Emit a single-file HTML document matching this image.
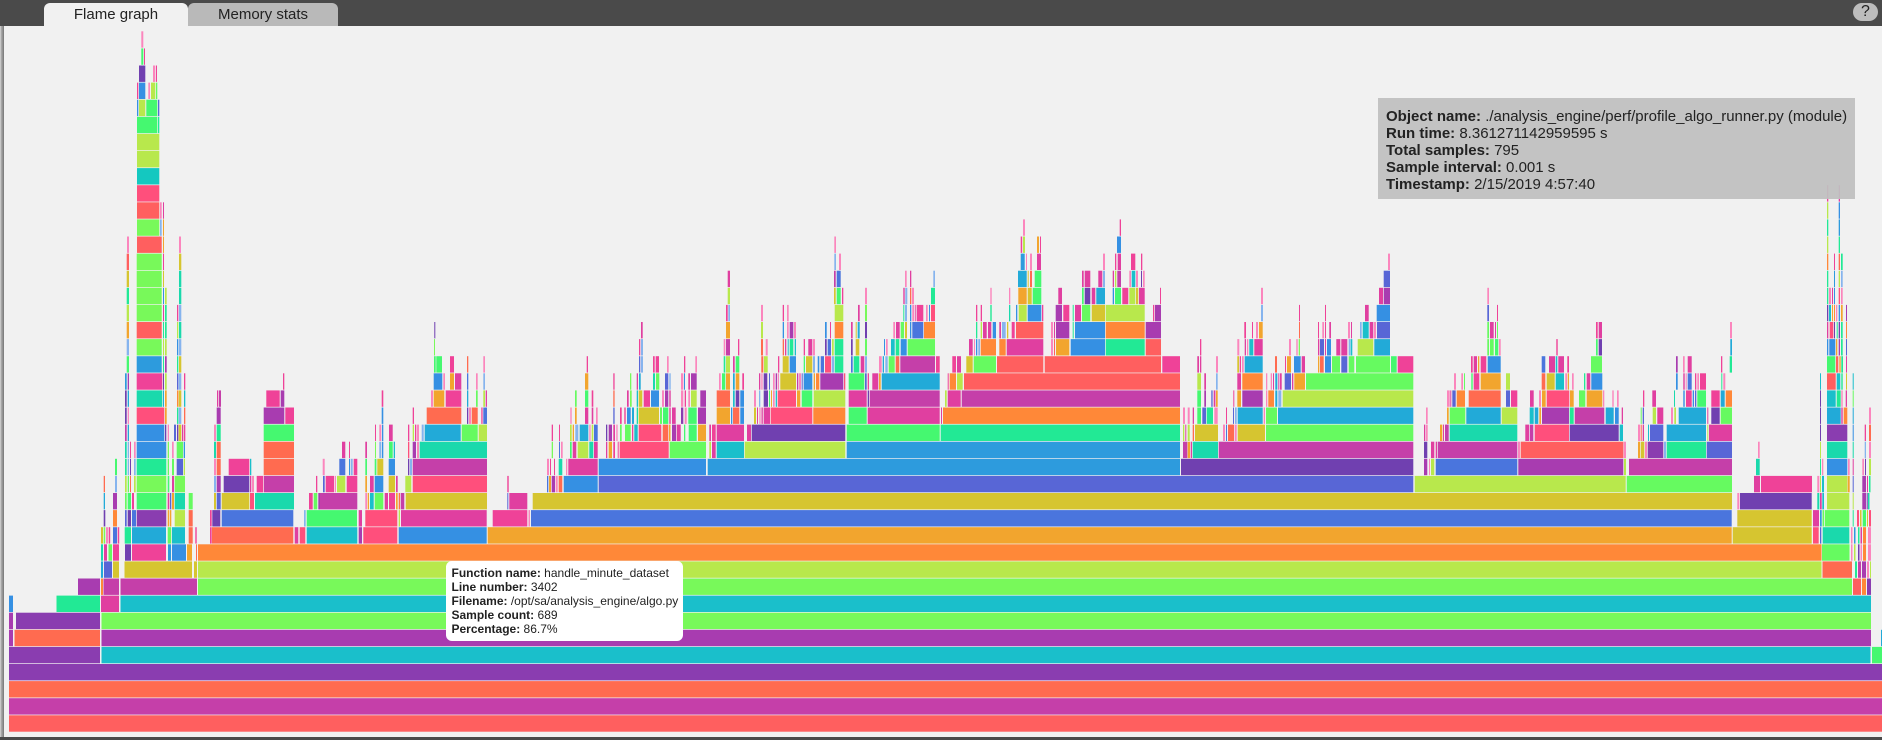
<!DOCTYPE html>
<html><head><meta charset="utf-8"><style>
html,body{margin:0;padding:0;width:1882px;height:740px;overflow:hidden;background:#f1f1f1;font-family:"Liberation Sans",sans-serif}
#top{position:absolute;left:0;top:0;width:1882px;height:26px;background:#4a4a4a}
#bot{position:absolute;left:0;top:737px;width:1882px;height:3px;background:#4a4a4a}
#l1{position:absolute;left:0;top:26px;width:1px;height:711px;background:#c8c8c8}
#l2{position:absolute;left:1px;top:26px;width:3px;height:711px;background:linear-gradient(90deg,#b0b0b0,#777)}
.tab{position:absolute;top:3px;height:23px;line-height:24px;text-align:center;font-size:15px;color:#222;border-radius:6px 6px 0 0}
#q{position:absolute;left:1853px;top:3px;width:25px;height:18px;border-radius:9px;background:#bdbdbd;text-align:center;font-size:16px;line-height:18px;color:#222}
svg{position:absolute;left:0;top:0}
rect{height:16.4px}
.a{fill:#ff5f5f}.b{fill:#c53fa9}.c{fill:#ff6b50}.d{fill:#8a3db0}.e{fill:#1abfcb}.f{fill:#a83cb0}.g{fill:#78f95a}.h{fill:#b8e84c}.i{fill:#ff8838}.j{fill:#f2a52e}.k{fill:#4a75dd}.l{fill:#5866d6}.m{fill:#2d9bdd}.n{fill:#22e995}.o{fill:#ef4298}.p{fill:#d6c530}.q{fill:#66fa60}.r{fill:#1ad9ac}.s{fill:#7040b0}.t{fill:#ff4f7c}.u{fill:#3590e3}.v{fill:#45f870}.w{fill:#22aad8}.x{fill:#e03fa0}.y{fill:#fb86bd}.z{fill:#86b4ee}
#info{position:absolute;left:1378px;top:98px;width:477px;height:101px;background:rgba(191,191,191,.94);box-sizing:border-box;padding:9.5px 0 0 8px;font-size:15px;line-height:17px;color:#222;white-space:nowrap}
#tip{position:absolute;left:446px;top:561px;width:237px;height:80px;background:#fff;border-radius:6px;box-sizing:border-box;padding:5px 0 0 5.5px;font-size:12px;line-height:14.1px;color:#222;white-space:nowrap}
</style></head><body>
<div id="top"></div><div id="bot"></div><div id="l1"></div><div id="l2"></div>
<div class="tab" style="left:44px;width:144px;background:#f1f1f1">Flame graph</div>
<div class="tab" style="left:188px;width:150px;background:#b9b9b9">Memory stats</div>
<div id="q">?</div>
<svg width="1882" height="740" xmlns="http://www.w3.org/2000/svg">
<g transform="translate(0,715.3)"><rect x=9 width=1873 class=a /></g>
<g transform="translate(0,698.2)"><rect x=9 width=1873 class=b /></g>
<g transform="translate(0,681.1)"><rect x=9 width=1873 class=c /></g>
<g transform="translate(0,664)"><rect x=9 width=1873 class=d /></g>
<g transform="translate(0,646.9)"><rect x=9 width=91 class=d /><rect x=101.5 width=1769 class=e /><rect x=1872 width=10 class=v /></g>
<g transform="translate(0,629.8)"><rect x=9 width=4 class=f /><rect x=14.5 width=85.5 class=c /><rect x=101.5 width=1769.5 class=f /><rect x=1881 width=1 class=w /></g>
<g transform="translate(0,612.7)"><rect x=9 width=4 class=f /><rect x=16 width=84 class=d /><rect x=101.5 width=1769.5 class=g /></g>
<g transform="translate(0,595.6)"><rect x=9 width=4 class=u /><rect x=56.5 width=43.5 class=n /><rect x=101 width=18 class=x /><rect x=120.5 width=1750.5 class=e /></g>
<g transform="translate(0,578.5)"><rect x=78 width=22 class=f /><rect x=101 width=2 class=i /><rect x=103.5 width=15.5 class=b /><rect x=120.5 width=76.5 class=b /><rect x=198 width=1654 class=g /><rect x=1853 width=8 class=a /><rect x=1862 width=4 class=i /><rect x=1867 width=4 class=d /></g>
<g transform="translate(0,561.4)"><rect x=101 width=2 class=w /><rect x=104 width=8 class=l /><rect x=113 width=6 class=p /><rect x=124.5 width=67.5 class=p /><rect x=194 width=3 class=p /><rect x=198 width=1623.5 class=h /><rect x=1822.5 width=29.5 class=c /><rect x=1855 width=2 class=n /><rect x=1858 width=3 class=b /><rect x=1862 width=4 class=f /><rect x=1867 width=2 class=y /><rect x=1870 width=1 class=h /></g>
<g transform="translate(0,544.3)"><rect x=101 width=2 class=r /><rect x=104 width=3 class=x /><rect x=108.5 width=3.5 class=q /><rect x=113 width=6 class=o /><rect x=125 width=6 class=s /><rect x=132 width=34 class=o /><rect x=168 width=3 class=m /><rect x=172 width=14 class=u /><rect x=187 width=5 class=j /><rect x=196 width=1 class=c /><rect x=198 width=1623.5 class=i /><rect x=1822 width=27.5 class=q /><rect x=1851 width=1.5 class=y /><rect x=1854 width=1.5 class=h /><rect x=1858 width=1.5 class=s /><rect x=1860.5 width=1.5 class=y /><rect x=1863 width=3 class=i /><rect x=1868 width=3 class=y /></g>
<g transform="translate(0,527.2)"><rect x=101 width=2 class=p /><rect x=103.7 width=1.5 class=g /><rect x=106 width=2 class=y /><rect x=108.7 width=1.5 class=o /><rect x=113 width=4 class=k /><rect x=117.7 width=1.5 class=o /><rect x=124.7 width=6.3 class=n /><rect x=132 width=34 class=w /><rect x=167.7 width=3.5 class=q /><rect x=172 width=13 class=e /><rect x=188.7 width=4 class=c /><rect x=195.3 width=1.4 class=o /><rect x=210 width=1.7 class=o /><rect x=212 width=81.3 class=c /><rect x=294.7 width=3.6 class=x /><rect x=299.7 width=5.6 class=t /><rect x=306.7 width=50.6 class=e /><rect x=358.7 width=3.3 class=f /><rect x=363.3 width=34 class=t /><rect x=398.7 width=88 class=u /><rect x=487.7 width=1244 class=j /><rect x=1732.7 width=79 class=p /><rect x=1813 width=5.7 class=t /><rect x=1820 width=1.3 class=l /><rect x=1822.7 width=26.6 class=r /><rect x=1851 width=1.5 class=y /><rect x=1854 width=1.5 class=m /><rect x=1858 width=1.5 class=n /><rect x=1860.5 width=1.5 class=x /><rect x=1863 width=3 class=i /><rect x=1868 width=3 class=y /></g>
<g transform="translate(0,510.1)"><rect x=103.7 width=1.6 class=s /><rect x=113 width=4 class=i /><rect x=125 width=1.7 class=l /><rect x=127.7 width=3.3 class=s /><rect x=132 width=4 class=k /><rect x=136.7 width=29.6 class=d /><rect x=167.7 width=1.6 class=j /><rect x=170 width=1.3 class=j /><rect x=174.7 width=10.3 class=h /><rect x=188.7 width=4 class=c /><rect x=210 width=1.7 class=o /><rect x=212.3 width=8 class=s /><rect x=221.7 width=71.6 class=k /><rect x=304 width=1.7 class=z /><rect x=306.7 width=50.3 class=v /><rect x=358.7 width=3.3 class=x /><rect x=365.3 width=32 class=t /><rect x=398.7 width=1.3 class=h /><rect x=401 width=85.7 class=x /><rect x=492.7 width=34.6 class=o /><rect x=528.5 width=1.5 class=y /><rect x=531 width=1200.7 class=k /><rect x=1737.3 width=74.4 class=p /><rect x=1813 width=6 class=x /><rect x=1820 width=1.7 class=m /><rect x=1822.5 width=1.7 class=q /><rect x=1825 width=24.3 class=q /><rect x=1852.7 width=1 class=n /><rect x=1857 width=2 class=t /><rect x=1860 width=1.5 class=p /><rect x=1862.7 width=3.3 class=v /><rect x=1867 width=1 class=p /><rect x=1869 width=2 class=t /></g>
<g transform="translate(0,493)"><rect x=103.7 width=1.3 class=w /><rect x=113 width=4 class=f /><rect x=125 width=1.7 class=q /><rect x=127.7 width=3.3 class=v /><rect x=132 width=2 class=o /><rect x=136.7 width=29.6 class=v /><rect x=167.7 width=1.6 class=x /><rect x=170 width=1.3 class=l /><rect x=172 width=2 class=j /><rect x=174.7 width=10.3 class=r /><rect x=188.7 width=4 class=q /><rect x=214 width=2 class=p /><rect x=216.7 width=4 class=l /><rect x=221.7 width=27.6 class=p /><rect x=250 width=4 class=t /><rect x=255 width=39 class=r /><rect x=309 width=3.7 class=o /><rect x=313.7 width=3.6 class=q /><rect x=318.3 width=1.7 class=f /><rect x=320 width=37.3 class=b /><rect x=365.3 width=1.7 class=y /><rect x=367.7 width=1.3 class=j /><rect x=370 width=3.7 class=e /><rect x=374.7 width=8.6 class=q /><rect x=384.7 width=3.3 class=x /><rect x=389 width=6 class=o /><rect x=396 width=1.7 class=j /><rect x=398.7 width=1.3 class=c /><rect x=400.7 width=3.6 class=b /><rect x=405.7 width=81.3 class=p /><rect x=507.3 width=1 class=l /><rect x=509.3 width=18 class=x /><rect x=532.7 width=1199.3 class=p /><rect x=1737.3 width=2 class=y /><rect x=1740 width=71.7 class=s /><rect x=1817.3 width=2 class=r /><rect x=1820 width=1.7 class=x /><rect x=1822.3 width=1.7 class=e /><rect x=1827 width=22.3 class=h /><rect x=1852.7 width=1 class=h /><rect x=1862.3 width=3.7 class=f /><rect x=1866.7 width=1 class=s /><rect x=1868 width=1.5 class=r /></g>
<g transform="translate(0,475.9)"><rect x=103.7 width=1.3 class=c /><rect x=115 width=2 class=z /><rect x=125 width=1.7 class=h /><rect x=127.7 width=1.3 class=q /><rect x=130 width=1 class=c /><rect x=134 width=1.7 class=h /><rect x=136.7 width=29.6 class=g /><rect x=167.7 width=1.6 class=v /><rect x=172 width=2 class=x /><rect x=174.7 width=10.3 class=g /><rect x=214 width=2 class=z /><rect x=216.7 width=4 class=f /><rect x=223.7 width=25.6 class=s /><rect x=250 width=1.3 class=x /><rect x=252 width=2 class=y /><rect x=256.7 width=6.6 class=o /><rect x=264 width=30 class=b /><rect x=316 width=1.3 class=o /><rect x=323 width=1.7 class=l /><rect x=325.7 width=8.3 class=o /><rect x=334.7 width=1.3 class=y /><rect x=337 width=8.3 class=h /><rect x=346.7 width=10.6 class=o /><rect x=365.3 width=1.7 class=j /><rect x=370 width=3.7 class=x /><rect x=374.7 width=8.6 class=u /><rect x=388.7 width=6.3 class=p /><rect x=396 width=1.7 class=x /><rect x=405.3 width=6 class=h /><rect x=412.7 width=74.3 class=t /><rect x=507.3 width=1.4 class=o /><rect x=547 width=1.3 class=k /><rect x=549 width=2 class=j /><rect x=551.7 width=3.3 class=f /><rect x=555.7 width=2 class=y /><rect x=558.7 width=3.6 class=c /><rect x=563.7 width=34 class=u /><rect x=598.7 width=814.6 class=l /><rect x=1414.7 width=211 class=h /><rect x=1626.7 width=105.3 class=q /><rect x=1754 width=6 class=x /><rect x=1761 width=51 class=o /><rect x=1817.3 width=2 class=y /><rect x=1820 width=1 class=h /><rect x=1822 width=2 class=e /><rect x=1827 width=20.3 class=h /><rect x=1847.7 width=2 class=j /><rect x=1852.7 width=1 class=l /><rect x=1862.3 width=3.7 class=f /><rect x=1867 width=1 class=x /><rect x=1869 width=1.5 class=n /></g>
<g transform="translate(0,458.8)"><rect x=115 width=2 class=v /><rect x=125 width=1.7 class=n /><rect x=127.7 width=1.3 class=z /><rect x=130 width=1 class=s /><rect x=134 width=1.7 class=z /><rect x=136.7 width=29.6 class=n /><rect x=167.7 width=1.3 class=q /><rect x=172 width=2 class=q /><rect x=176.7 width=6.3 class=l /><rect x=183.7 width=1.3 class=h /><rect x=214 width=2 class=y /><rect x=216.7 width=4 class=c /><rect x=228.7 width=20.6 class=o /><rect x=250 width=1.3 class=e /><rect x=263.7 width=30.3 class=c /><rect x=322.7 width=2 class=y /><rect x=339.3 width=6 class=k /><rect x=349 width=1 class=u /><rect x=350.7 width=2 class=z /><rect x=353.7 width=3.6 class=o /><rect x=365.3 width=1.7 class=v /><rect x=374.7 width=1.7 class=v /><rect x=377.3 width=6 class=p /><rect x=388.7 width=6.3 class=u /><rect x=408 width=1.3 class=s /><rect x=410 width=2 class=z /><rect x=412.7 width=74.3 class=b /><rect x=547 width=2 class=y /><rect x=550 width=1 class=o /><rect x=554 width=1 class=o /><rect x=558.7 width=3.6 class=r /><rect x=566 width=1.3 class=y /><rect x=568.3 width=29.4 class=x /><rect x=598.7 width=107.3 class=u /><rect x=707.7 width=472.3 class=m /><rect x=1181 width=232.3 class=s /><rect x=1424 width=3.3 class=f /><rect x=1429 width=1 class=y /><rect x=1431 width=3.3 class=h /><rect x=1435.7 width=81.6 class=k /><rect x=1518.3 width=105 class=f /><rect x=1624 width=2 class=h /><rect x=1629 width=103 class=b /><rect x=1756 width=3.7 class=r /><rect x=1820 width=1 class=n /><rect x=1822 width=1.3 class=y /><rect x=1827 width=20.3 class=u /><rect x=1848 width=1.7 class=y /><rect x=1852.7 width=1 class=x /><rect x=1862.3 width=1.7 class=y /><rect x=1865 width=1 class=s /><rect x=1869 width=2 class=h /></g>
<g transform="translate(0,441.7)"><rect x=125 width=1.7 class=r /><rect x=127.7 width=1.3 class=z /><rect x=130 width=1 class=o /><rect x=134 width=1.7 class=y /><rect x=136.7 width=29.6 class=u /><rect x=167.7 width=1.3 class=g /><rect x=172 width=1.7 class=y /><rect x=176.7 width=6.3 class=q /><rect x=183.7 width=1.3 class=m /><rect x=214 width=2 class=r /><rect x=216.7 width=4 class=c /><rect x=263.7 width=30.3 class=c /><rect x=342 width=3.3 class=x /><rect x=349 width=1 class=o /><rect x=365.3 width=1.7 class=x /><rect x=375 width=1 class=g /><rect x=379.3 width=2 class=z /><rect x=382 width=1.3 class=u /><rect x=389 width=3.7 class=v /><rect x=393.7 width=1.3 class=e /><rect x=408 width=1.3 class=t /><rect x=412.7 width=3.3 class=f /><rect x=417 width=2 class=y /><rect x=419.7 width=67.3 class=r /><rect x=551.7 width=1.3 class=g /><rect x=559 width=1 class=k /><rect x=561 width=1.7 class=y /><rect x=570 width=1.7 class=v /><rect x=572.7 width=3.6 class=x /><rect x=577.7 width=10.6 class=h /><rect x=589.3 width=4 class=r /><rect x=594 width=3.7 class=x /><rect x=606 width=1.3 class=x /><rect x=608.7 width=3.3 class=j /><rect x=613.3 width=1.7 class=o /><rect x=617.7 width=1 class=o /><rect x=619.7 width=49 class=t /><rect x=669.7 width=36.3 class=q /><rect x=709.3 width=1.7 class=h /><rect x=712 width=3.7 class=x /><rect x=716.7 width=27.3 class=e /><rect x=744.7 width=100.6 class=h /><rect x=846.7 width=333.3 class=m /><rect x=1183 width=4.3 class=b /><rect x=1187.7 width=2.3 class=j /><rect x=1190.7 width=1.3 class=x /><rect x=1192.7 width=25.3 class=r /><rect x=1218.7 width=194.6 class=b /><rect x=1424 width=3.3 class=s /><rect x=1431 width=3.3 class=x /><rect x=1435.7 width=1.3 class=x /><rect x=1437.7 width=79.6 class=b /><rect x=1518 width=2 class=y /><rect x=1520.7 width=102.6 class=a /><rect x=1623.7 width=2.3 class=y /><rect x=1638 width=2 class=j /><rect x=1640.7 width=3.6 class=p /><rect x=1645 width=2 class=y /><rect x=1647.7 width=15.6 class=d /><rect x=1664 width=2 class=z /><rect x=1666.7 width=39.3 class=n /><rect x=1706.7 width=25.3 class=l /><rect x=1758 width=1.7 class=y /><rect x=1820 width=1 class=h /><rect x=1827 width=20.3 class=r /><rect x=1852.7 width=1 class=r /><rect x=1864.7 width=1.3 class=z /><rect x=1869 width=2 class=y /></g>
<g transform="translate(0,424.6)"><rect x=125 width=1.7 class=b /><rect x=127.7 width=1.3 class=w /><rect x=136.7 width=27.6 class=u /><rect x=165 width=1.3 class=s /><rect x=167.7 width=1.3 class=y /><rect x=174 width=2 class=l /><rect x=177 width=1.3 class=s /><rect x=178.7 width=2.6 class=p /><rect x=182 width=1.3 class=x /><rect x=184 width=1.3 class=o /><rect x=214 width=2 class=y /><rect x=216.7 width=4 class=n /><rect x=263.7 width=30.3 class=v /><rect x=375 width=1 class=o /><rect x=379.3 width=2 class=y /><rect x=382 width=1.3 class=u /><rect x=389 width=3.7 class=x /><rect x=408 width=1.3 class=o /><rect x=412.7 width=1.3 class=h /><rect x=415 width=1.3 class=o /><rect x=417 width=2 class=y /><rect x=421.7 width=2 class=z /><rect x=424.7 width=36 class=w /><rect x=461.7 width=16 class=q /><rect x=478.7 width=8.3 class=h /><rect x=551.7 width=1.3 class=o /><rect x=559 width=1 class=o /><rect x=570 width=1.7 class=h /><rect x=572.7 width=1.3 class=j /><rect x=575.3 width=3 class=z /><rect x=579.7 width=8.6 class=w /><rect x=589.3 width=1.3 class=y /><rect x=591.7 width=1.6 class=h /><rect x=594 width=3.7 class=k /><rect x=606 width=1.3 class=s /><rect x=608.7 width=3.3 class=f /><rect x=613.3 width=1.7 class=x /><rect x=616.3 width=1.3 class=y /><rect x=620 width=1.7 class=q /><rect x=625 width=5.7 class=q /><rect x=632 width=1.3 class=o /><rect x=634.3 width=3.4 class=e /><rect x=638.7 width=22.6 class=t /><rect x=662.7 width=5.6 class=c /><rect x=669 width=1.5 class=j /><rect x=672 width=4 class=f /><rect x=676.7 width=4 class=x /><rect x=684 width=1.3 class=v /><rect x=688.7 width=8 class=v /><rect x=698 width=8 class=j /><rect x=709.3 width=1.7 class=x /><rect x=712 width=3.7 class=o /><rect x=716.7 width=27.3 class=x /><rect x=747 width=4 class=x /><rect x=751.7 width=93.6 class=s /><rect x=846.7 width=93 class=v /><rect x=940.7 width=239.3 class=n /><rect x=1183 width=1.3 class=h /><rect x=1185.3 width=1 class=x /><rect x=1187.7 width=2 class=h /><rect x=1192.7 width=1.3 class=c /><rect x=1195 width=23 class=p /><rect x=1223 width=2 class=y /><rect x=1226 width=1 class=k /><rect x=1228 width=6 class=c /><rect x=1234.7 width=2 class=y /><rect x=1237.7 width=27.3 class=p /><rect x=1266 width=147.3 class=q /><rect x=1424 width=1.3 class=x /><rect x=1426 width=1.7 class=y /><rect x=1440 width=2.3 class=j /><rect x=1443 width=1 class=x /><rect x=1445 width=3.7 class=b /><rect x=1449.7 width=67.6 class=r /><rect x=1525.3 width=3.7 class=x /><rect x=1529.7 width=3.6 class=b /><rect x=1534.7 width=34.3 class=t /><rect x=1569.7 width=49 class=s /><rect x=1619.7 width=3.3 class=e /><rect x=1638 width=2 class=y /><rect x=1640.7 width=1 class=c /><rect x=1642.7 width=1.3 class=x /><rect x=1648 width=1 class=e /><rect x=1650 width=13.3 class=l /><rect x=1666.7 width=39.3 class=w /><rect x=1707.3 width=1 class=h /><rect x=1709 width=23 class=x /><rect x=1820 width=1 class=s /><rect x=1827 width=20.3 class=d /><rect x=1852.7 width=1 class=u /><rect x=1864.7 width=1.3 class=o /><rect x=1869 width=2 class=c /></g>
<g transform="translate(0,407.5)"><rect x=125 width=1.7 class=s /><rect x=127.7 width=1.3 class=y /><rect x=136.7 width=27.6 class=t /><rect x=165 width=1.7 class=j /><rect x=177 width=1.3 class=n /><rect x=178.7 width=2.6 class=z /><rect x=184 width=1.3 class=c /><rect x=216.7 width=4 class=f /><rect x=263.7 width=20.6 class=f /><rect x=285.3 width=8.7 class=o /><rect x=381.7 width=1.6 class=u /><rect x=412.7 width=1.3 class=o /><rect x=426.7 width=34.6 class=c /><rect x=467 width=1.3 class=s /><rect x=469 width=2 class=y /><rect x=471.7 width=6 class=c /><rect x=481.3 width=1.3 class=o /><rect x=483.3 width=3.7 class=k /><rect x=570.3 width=1.4 class=y /><rect x=575 width=1.7 class=j /><rect x=585 width=3.3 class=x /><rect x=591.7 width=1.6 class=x /><rect x=596 width=1.7 class=y /><rect x=613.3 width=1.3 class=l /><rect x=620 width=1.7 class=o /><rect x=624.3 width=1.4 class=o /><rect x=627 width=3.7 class=u /><rect x=632 width=2 class=w /><rect x=636.7 width=1.3 class=r /><rect x=638.7 width=20.3 class=p /><rect x=660 width=2 class=q /><rect x=663 width=5.3 class=v /><rect x=669.3 width=1.4 class=x /><rect x=672 width=3.7 class=x /><rect x=681 width=2.3 class=d /><rect x=684.7 width=2 class=y /><rect x=688.3 width=8.4 class=v /><rect x=698 width=8 class=f /><rect x=716.7 width=13.3 class=j /><rect x=731 width=1.3 class=u /><rect x=733 width=6.3 class=c /><rect x=740.3 width=3.7 class=u /><rect x=754 width=2 class=p /><rect x=757 width=1 class=x /><rect x=759.3 width=1.3 class=y /><rect x=761.5 width=1.3 class=x /><rect x=763.7 width=6.3 class=x /><rect x=770.7 width=41.6 class=t /><rect x=813.3 width=32 class=i /><rect x=848.7 width=18 class=v /><rect x=867.7 width=72 class=x /><rect x=941 width=1 class=x /><rect x=943 width=237 class=i /><rect x=1183 width=2 class=y /><rect x=1187.7 width=2 class=y /><rect x=1192.7 width=1.3 class=x /><rect x=1197.3 width=3.7 class=v /><rect x=1202.3 width=3.7 class=l /><rect x=1206.7 width=6.3 class=n /><rect x=1214.3 width=3.4 class=y /><rect x=1226 width=1 class=o /><rect x=1233 width=1 class=l /><rect x=1235 width=1.7 class=z /><rect x=1237.7 width=25 class=w /><rect x=1263.7 width=1.3 class=y /><rect x=1266 width=11 class=q /><rect x=1278 width=135.3 class=w /><rect x=1426 width=1.7 class=y /><rect x=1447 width=1.7 class=j /><rect x=1449.7 width=15.6 class=q /><rect x=1466.3 width=34.4 class=w /><rect x=1501.7 width=15.6 class=h /><rect x=1529.7 width=4 class=e /><rect x=1534.7 width=3.6 class=w /><rect x=1539.3 width=1.7 class=j /><rect x=1542 width=27 class=f /><rect x=1569.7 width=4 class=n /><rect x=1574.7 width=29.6 class=b /><rect x=1605.7 width=8 class=w /><rect x=1615 width=3.7 class=u /><rect x=1621.7 width=1.3 class=x /><rect x=1640.7 width=1 class=q /><rect x=1642.7 width=1.3 class=l /><rect x=1652.7 width=3.3 class=h /><rect x=1657.3 width=6 class=x /><rect x=1671 width=2 class=y /><rect x=1674.3 width=1.7 class=h /><rect x=1678.7 width=27.3 class=w /><rect x=1707.3 width=1 class=x /><rect x=1711.3 width=8.4 class=s /><rect x=1720.7 width=11.3 class=q /><rect x=1820 width=1 class=s /><rect x=1827 width=13.7 class=w /><rect x=1841.3 width=1.4 class=x /><rect x=1843.7 width=3.6 class=i /><rect x=1852.7 width=1 class=w /><rect x=1869 width=2 class=y /></g>
<g transform="translate(0,390.4)"><rect x=125 width=1.7 class=s /><rect x=127.7 width=1.3 class=w /><rect x=136.7 width=25.6 class=r /><rect x=163 width=1 class=w /><rect x=165 width=1.7 class=j /><rect x=177 width=1.3 class=i /><rect x=178.7 width=2.6 class=p /><rect x=184 width=1.3 class=e /><rect x=217 width=1.3 class=x /><rect x=219 width=2 class=b /><rect x=266.3 width=13.4 class=o /><rect x=280.7 width=3.6 class=f /><rect x=381.7 width=1.6 class=o /><rect x=431 width=2 class=y /><rect x=433.7 width=10.6 class=j /><rect x=445.7 width=15.6 class=o /><rect x=467 width=1.3 class=w /><rect x=476 width=1.7 class=q /><rect x=483.3 width=1.7 class=h /><rect x=485.7 width=1.3 class=x /><rect x=575 width=1.7 class=q /><rect x=585 width=3.3 class=v /><rect x=591.7 width=1.6 class=o /><rect x=613.3 width=1.3 class=c /><rect x=627 width=1.7 class=x /><rect x=630 width=1.7 class=g /><rect x=636.7 width=1.3 class=e /><rect x=638.7 width=3.6 class=p /><rect x=643.7 width=6.3 class=o /><rect x=651 width=8 class=u /><rect x=662 width=2 class=y /><rect x=665 width=3.3 class=f /><rect x=669.3 width=1.4 class=x /><rect x=681 width=2.3 class=y /><rect x=684.7 width=1.3 class=o /><rect x=688.3 width=1.7 class=y /><rect x=691 width=5.7 class=h /><rect x=700.3 width=5.7 class=f /><rect x=716.7 width=13.3 class=c /><rect x=733 width=1.7 class=e /><rect x=735.7 width=3.6 class=s /><rect x=740.3 width=3.7 class=u /><rect x=754 width=2 class=y /><rect x=759 width=1.3 class=z /><rect x=763.7 width=4.3 class=s /><rect x=769 width=1 class=v /><rect x=771 width=1 class=j /><rect x=773 width=1.7 class=y /><rect x=775.7 width=1.3 class=e /><rect x=777.7 width=18.3 class=t /><rect x=797 width=3.3 class=j /><rect x=801.7 width=10.6 class=v /><rect x=813.7 width=31.6 class=h /><rect x=848.7 width=18 class=x /><rect x=867.7 width=1.3 class=s /><rect x=869.7 width=70 class=b /><rect x=945 width=1.7 class=h /><rect x=947.7 width=13 class=x /><rect x=961.7 width=218.3 class=b /><rect x=1197.3 width=3.7 class=v /><rect x=1204.3 width=1.7 class=f /><rect x=1211.3 width=1.3 class=l /><rect x=1213.7 width=1.7 class=x /><rect x=1216 width=1.7 class=j /><rect x=1233.3 width=1 class=o /><rect x=1237.3 width=3.7 class=j /><rect x=1242.3 width=20.4 class=f /><rect x=1266 width=1.3 class=y /><rect x=1268.3 width=5.7 class=i /><rect x=1275.3 width=2 class=w /><rect x=1278.3 width=3 class=z /><rect x=1282.7 width=130.6 class=h /><rect x=1447 width=2.7 class=y /><rect x=1450.3 width=1 class=x /><rect x=1452.3 width=3.4 class=l /><rect x=1456.7 width=8.3 class=i /><rect x=1468.7 width=32 class=c /><rect x=1506 width=4 class=l /><rect x=1511 width=6.3 class=o /><rect x=1530 width=3.7 class=x /><rect x=1539 width=2 class=y /><rect x=1542 width=3.7 class=j /><rect x=1546.7 width=22.6 class=t /><rect x=1570 width=3.7 class=j /><rect x=1579 width=6.3 class=q /><rect x=1586.7 width=15.6 class=j /><rect x=1603 width=1.3 class=y /><rect x=1612.3 width=1.4 class=y /><rect x=1617 width=1.7 class=y /><rect x=1643 width=1.3 class=o /><rect x=1652.3 width=3.7 class=x /><rect x=1674 width=1 class=r /><rect x=1683.3 width=1.4 class=u /><rect x=1686 width=5.7 class=o /><rect x=1692.7 width=1.3 class=u /><rect x=1695 width=1.3 class=l /><rect x=1697.3 width=8.7 class=v /><rect x=1711.3 width=8.4 class=o /><rect x=1720.7 width=4 class=w /><rect x=1725.7 width=6.3 class=i /><rect x=1820 width=1 class=s /><rect x=1827 width=8.7 class=e /><rect x=1836.7 width=4 class=n /><rect x=1841.3 width=1.4 class=y /><rect x=1845.7 width=1.3 class=x /><rect x=1852.7 width=1 class=q /></g>
<g transform="translate(0,373.3)"><rect x=125 width=1.7 class=m /><rect x=127.7 width=1.3 class=f /><rect x=136.7 width=25.6 class=o /><rect x=163 width=1 class=s /><rect x=165 width=1.7 class=h /><rect x=177 width=1.3 class=l /><rect x=178.7 width=2.6 class=z /><rect x=184 width=1.3 class=o /><rect x=283 width=1.3 class=o /><rect x=433.7 width=8.6 class=u /><rect x=443.3 width=1.7 class=y /><rect x=450 width=4 class=j /><rect x=455 width=6.3 class=x /><rect x=467 width=1.3 class=k /><rect x=476 width=1.7 class=y /><rect x=483.3 width=1.7 class=z /><rect x=585 width=3.3 class=j /><rect x=613.3 width=1.3 class=o /><rect x=630 width=1.3 class=g /><rect x=636.7 width=1.3 class=x /><rect x=639 width=1.7 class=w /><rect x=653 width=2 class=r /><rect x=656 width=3.3 class=q /><rect x=665 width=3.3 class=l /><rect x=669.3 width=1.4 class=z /><rect x=681 width=2.3 class=y /><rect x=684 width=1 class=u /><rect x=688.3 width=1.7 class=x /><rect x=691 width=5.7 class=f /><rect x=719 width=1.7 class=y /><rect x=722 width=3.3 class=v /><rect x=726 width=4 class=j /><rect x=733 width=1.7 class=w /><rect x=735.7 width=3.6 class=j /><rect x=742.3 width=1.7 class=o /><rect x=759 width=1.3 class=x /><rect x=761.3 width=1.3 class=y /><rect x=763.7 width=3.6 class=s /><rect x=769 width=1 class=l /><rect x=773 width=1.7 class=y /><rect x=775.7 width=1.3 class=f /><rect x=777.7 width=1.3 class=y /><rect x=780.3 width=15.7 class=p /><rect x=797 width=1.3 class=b /><rect x=799 width=2 class=y /><rect x=801.7 width=1 class=l /><rect x=803.7 width=8.6 class=u /><rect x=813.7 width=1.3 class=j /><rect x=816 width=3.3 class=i /><rect x=820.3 width=23 class=f /><rect x=844 width=1.3 class=t /><rect x=848.7 width=15.6 class=v /><rect x=865 width=1.7 class=l /><rect x=867.7 width=1.3 class=o /><rect x=872.3 width=6 class=x /><rect x=879 width=1.7 class=j /><rect x=881.7 width=58 class=w /><rect x=947.7 width=1 class=o /><rect x=949.7 width=6.3 class=i /><rect x=957 width=5.7 class=h /><rect x=964 width=216 class=a /><rect x=1197.3 width=3.7 class=h /><rect x=1204.3 width=1.7 class=x /><rect x=1216 width=1.7 class=z /><rect x=1237.3 width=3.7 class=x /><rect x=1242.3 width=20.4 class=i /><rect x=1266 width=1.3 class=y /><rect x=1270.7 width=1.3 class=y /><rect x=1273 width=1 class=x /><rect x=1275.3 width=2 class=w /><rect x=1278.3 width=1 class=x /><rect x=1280 width=1.7 class=x /><rect x=1284.7 width=6.3 class=l /><rect x=1292 width=1.3 class=x /><rect x=1294.3 width=10.7 class=j /><rect x=1306 width=107.3 class=q /><rect x=1454 width=2 class=y /><rect x=1461.3 width=1.7 class=y /><rect x=1464 width=1 class=q /><rect x=1471.3 width=1.4 class=v /><rect x=1473.7 width=5.6 class=o /><rect x=1480.7 width=20 class=j /><rect x=1506 width=4 class=h /><rect x=1541.7 width=3.6 class=c /><rect x=1546.7 width=8 class=p /><rect x=1555.7 width=8.3 class=e /><rect x=1565.3 width=1.7 class=y /><rect x=1567.7 width=1.3 class=j /><rect x=1572 width=1.7 class=y /><rect x=1584 width=1.3 class=n /><rect x=1586.7 width=3.6 class=x /><rect x=1591.3 width=11 class=u /><rect x=1676 width=1.7 class=u /><rect x=1683.3 width=1.4 class=x /><rect x=1685.7 width=1 class=y /><rect x=1687.7 width=4 class=k /><rect x=1695 width=1.3 class=o /><rect x=1697.3 width=1.7 class=y /><rect x=1700 width=6 class=o /><rect x=1721.3 width=1 class=n /><rect x=1723.3 width=2 class=y /><rect x=1820 width=1 class=e /><rect x=1827 width=8.7 class=a /><rect x=1836.7 width=3.6 class=e /><rect x=1841.3 width=1.4 class=n /><rect x=1846 width=1 class=p /><rect x=1852.7 width=1 class=e /></g>
<g transform="translate(0,356.2)"><rect x=126.7 width=2.3 class=v /><rect x=136.7 width=25 class=m /><rect x=163 width=1 class=n /><rect x=165 width=1.7 class=f /><rect x=177 width=1.3 class=n /><rect x=179 width=2.3 class=p /><rect x=434 width=1.7 class=v /><rect x=436.3 width=5.7 class=v /><rect x=450 width=4 class=o /><rect x=467 width=1.3 class=c /><rect x=483.3 width=1.7 class=y /><rect x=586.7 width=1.3 class=o /><rect x=639 width=1.3 class=l /><rect x=641 width=2 class=z /><rect x=653 width=1.7 class=o /><rect x=655.7 width=3.3 class=o /><rect x=667 width=1.7 class=y /><rect x=684 width=1.3 class=o /><rect x=695.3 width=1.7 class=y /><rect x=723.7 width=1.6 class=n /><rect x=726 width=4 class=h /><rect x=733 width=1.7 class=x /><rect x=735.7 width=3.6 class=v /><rect x=761.3 width=2 class=c /><rect x=764 width=3.7 class=h /><rect x=778 width=1.3 class=o /><rect x=782.7 width=6 class=p /><rect x=789.7 width=6.3 class=u /><rect x=803.7 width=1.3 class=v /><rect x=806 width=6.3 class=p /><rect x=813 width=2 class=z /><rect x=817.7 width=1.6 class=u /><rect x=820.7 width=3.3 class=k /><rect x=825 width=6 class=t /><rect x=831.7 width=2.3 class=z /><rect x=834.7 width=8.6 class=n /><rect x=851 width=1.7 class=k /><rect x=853.7 width=5.6 class=n /><rect x=860.7 width=3.6 class=x /><rect x=865 width=2 class=z /><rect x=879 width=2.7 class=y /><rect x=882.7 width=1.3 class=w /><rect x=885.3 width=2.4 class=z /><rect x=888.7 width=6 class=q /><rect x=895.7 width=3.6 class=c /><rect x=900.3 width=34.7 class=b /><rect x=936 width=3.7 class=o /><rect x=952.3 width=3.7 class=o /><rect x=957 width=4 class=x /><rect x=966.3 width=6.4 class=p /><rect x=973.7 width=22.3 class=q /><rect x=997 width=46.3 class=a /><rect x=1044.7 width=116.3 class=a /><rect x=1162.3 width=17.7 class=o /><rect x=1197.3 width=1.7 class=x /><rect x=1200 width=1.3 class=x /><rect x=1216 width=2 class=y /><rect x=1237.3 width=1.7 class=p /><rect x=1239.7 width=1.3 class=o /><rect x=1242 width=1.7 class=y /><rect x=1244.7 width=18 class=w /><rect x=1275 width=2 class=c /><rect x=1285 width=1 class=o /><rect x=1287 width=4 class=j /><rect x=1294 width=6.7 class=u /><rect x=1301.7 width=3.3 class=x /><rect x=1318 width=1.3 class=j /><rect x=1320 width=3.7 class=c /><rect x=1325 width=6 class=u /><rect x=1332 width=8 class=q /><rect x=1341.3 width=6 class=l /><rect x=1348.7 width=5.6 class=q /><rect x=1356 width=34 class=q /><rect x=1391 width=5.7 class=v /><rect x=1397.7 width=15.6 class=o /><rect x=1471 width=1.7 class=o /><rect x=1473.7 width=3.3 class=x /><rect x=1478 width=1.3 class=j /><rect x=1480.7 width=5.6 class=o /><rect x=1487.7 width=13 class=u /><rect x=1541.7 width=3.6 class=k /><rect x=1549 width=6 class=x /><rect x=1555.7 width=1.6 class=e /><rect x=1558.3 width=5.7 class=x /><rect x=1567.3 width=1.7 class=o /><rect x=1591 width=11 class=q /><rect x=1676 width=1.7 class=f /><rect x=1683 width=1.7 class=y /><rect x=1687.7 width=4 class=x /><rect x=1721 width=1.3 class=o /><rect x=1729.7 width=2.3 class=n /><rect x=1827 width=8.3 class=v /><rect x=1836 width=2.3 class=a /><rect x=1839.3 width=1.4 class=j /><rect x=1841.3 width=1.7 class=n /><rect x=1846 width=1 class=x /></g>
<g transform="translate(0,339.1)"><rect x=126.7 width=2.3 class=z /><rect x=136.7 width=25 class=g /><rect x=163 width=1 class=h /><rect x=165 width=1.7 class=h /><rect x=177 width=1.3 class=u /><rect x=179 width=2.3 class=z /><rect x=434 width=1 class=g /><rect x=639 width=1.3 class=o /><rect x=641 width=2 class=z /><rect x=723.7 width=1.6 class=y /><rect x=726 width=4 class=b /><rect x=738 width=1.3 class=o /><rect x=761 width=2 class=c /><rect x=765.7 width=2 class=y /><rect x=782.7 width=1.3 class=c /><rect x=785 width=1.3 class=x /><rect x=787.7 width=1 class=e /><rect x=789.7 width=3.6 class=n /><rect x=794.7 width=1.3 class=e /><rect x=803.7 width=1.3 class=o /><rect x=808.3 width=4 class=x /><rect x=813 width=2 class=y /><rect x=825 width=1.7 class=s /><rect x=827.7 width=3.3 class=k /><rect x=832 width=1.7 class=h /><rect x=834.7 width=8.6 class=n /><rect x=851 width=1.7 class=s /><rect x=855.7 width=3.6 class=p /><rect x=865 width=2 class=q /><rect x=884 width=1 class=u /><rect x=886 width=1.7 class=y /><rect x=891 width=3.7 class=e /><rect x=895.7 width=3.6 class=n /><rect x=900.7 width=6 class=u /><rect x=907.7 width=27.3 class=q /><rect x=969 width=3.7 class=x /><rect x=974 width=1 class=y /><rect x=976 width=1.3 class=u /><rect x=978.3 width=1.7 class=z /><rect x=980.7 width=15.3 class=i /><rect x=999.3 width=6.4 class=i /><rect x=1006.7 width=36.6 class=x /><rect x=1051 width=2 class=y /><rect x=1054 width=1 class=a /><rect x=1056 width=13.3 class=j /><rect x=1070.7 width=34.3 class=u /><rect x=1105.7 width=39 class=n /><rect x=1145.7 width=15.3 class=a /><rect x=1200 width=1.3 class=o /><rect x=1237.3 width=2 class=y /><rect x=1244.7 width=1.3 class=x /><rect x=1247 width=1.3 class=y /><rect x=1249.3 width=4 class=e /><rect x=1254.3 width=8.4 class=x /><rect x=1289 width=2 class=y /><rect x=1296.3 width=1.4 class=y /><rect x=1298.7 width=1.3 class=g /><rect x=1318 width=1.3 class=x /><rect x=1320 width=4 class=l /><rect x=1325 width=1 class=x /><rect x=1327 width=4 class=u /><rect x=1336.3 width=4 class=x /><rect x=1341.3 width=6 class=x /><rect x=1348.7 width=1.6 class=z /><rect x=1350.7 width=1.6 class=e /><rect x=1357.7 width=15.6 class=h /><rect x=1374.3 width=15.7 class=w /><rect x=1487.3 width=1.7 class=q /><rect x=1490 width=3.7 class=q /><rect x=1495 width=3.3 class=v /><rect x=1499 width=1.7 class=y /><rect x=1556.3 width=1.4 class=o /><rect x=1596 width=1.7 class=v /><rect x=1598.7 width=3.3 class=s /><rect x=1730.3 width=1.7 class=w /><rect x=1827 width=1.3 class=u /><rect x=1829.3 width=6 class=u /><rect x=1836 width=1.3 class=j /><rect x=1838.7 width=1.3 class=f /><rect x=1841 width=1.7 class=n /><rect x=1846 width=1 class=l /></g>
<g transform="translate(0,322)"><rect x=126.7 width=2.3 class=j /><rect x=136.7 width=25 class=a /><rect x=163 width=1 class=n /><rect x=165 width=1.7 class=n /><rect x=177 width=1.3 class=h /><rect x=179 width=2.3 class=r /><rect x=434.3 width=1 class=s /><rect x=641 width=1.7 class=x /><rect x=726 width=4 class=j /><rect x=761 width=2 class=h /><rect x=782.7 width=1.3 class=u /><rect x=787 width=1.7 class=y /><rect x=789.7 width=3.6 class=f /><rect x=794 width=2 class=y /><rect x=825 width=1.7 class=u /><rect x=830 width=1 class=o /><rect x=834.7 width=8.6 class=i /><rect x=851 width=1.7 class=x /><rect x=855.7 width=1 class=p /><rect x=857.7 width=2 class=w /><rect x=865 width=2 class=s /><rect x=893.3 width=1.7 class=y /><rect x=896 width=3.7 class=x /><rect x=900.7 width=3.3 class=q /><rect x=905 width=2 class=p /><rect x=910 width=1.3 class=u /><rect x=912.3 width=11 class=k /><rect x=924 width=11 class=i /><rect x=976 width=1.3 class=n /><rect x=980.7 width=1.3 class=h /><rect x=983 width=3.7 class=x /><rect x=988 width=3.3 class=x /><rect x=992.7 width=3.3 class=u /><rect x=999.3 width=1.7 class=x /><rect x=1002 width=3.7 class=z /><rect x=1007 width=1.3 class=p /><rect x=1011.7 width=3 class=o /><rect x=1016 width=27.3 class=a /><rect x=1051 width=2 class=y /><rect x=1054 width=1 class=x /><rect x=1056 width=13.3 class=f /><rect x=1072.7 width=1 class=n /><rect x=1075 width=30 class=u /><rect x=1105.7 width=39 class=i /><rect x=1145.7 width=15.3 class=f /><rect x=1244.3 width=1.7 class=o /><rect x=1252 width=1 class=o /><rect x=1256 width=2 class=y /><rect x=1259 width=3.7 class=j /><rect x=1299 width=1 class=c /><rect x=1318 width=1 class=o /><rect x=1322.3 width=1.7 class=y /><rect x=1325 width=1 class=o /><rect x=1329.3 width=1.7 class=x /><rect x=1348 width=2 class=y /><rect x=1351 width=1 class=x /><rect x=1360 width=1.7 class=z /><rect x=1362.7 width=6 class=e /><rect x=1369.7 width=3.6 class=x /><rect x=1374 width=2 class=y /><rect x=1377 width=13 class=l /><rect x=1487.3 width=1.7 class=q /><rect x=1490 width=3.7 class=x /><rect x=1495 width=1 class=x /><rect x=1497 width=1 class=q /><rect x=1596 width=1.7 class=o /><rect x=1598.7 width=3.3 class=x /><rect x=1730 width=2 class=y /><rect x=1827 width=1.3 class=x /><rect x=1829.7 width=3.6 class=t /><rect x=1834 width=1 class=s /><rect x=1836.7 width=1 class=n /><rect x=1838.7 width=1.3 class=s /><rect x=1841 width=1.7 class=n /><rect x=1846 width=1 class=i /></g>
<g transform="translate(0,304.9)"><rect x=126.7 width=2.3 class=h /><rect x=136.7 width=25 class=g /><rect x=163 width=1 class=x /><rect x=165 width=1.7 class=n /><rect x=177 width=1.3 class=o /><rect x=179 width=2.3 class=z /><rect x=726 width=1.7 class=o /><rect x=728.3 width=1.7 class=z /><rect x=761 width=2 class=y /><rect x=782.7 width=1.3 class=o /><rect x=787 width=1.7 class=y /><rect x=834.7 width=8.6 class=h /><rect x=858 width=1.7 class=x /><rect x=865 width=2 class=g /><rect x=903.3 width=1 class=n /><rect x=905 width=2 class=z /><rect x=910 width=1.3 class=u /><rect x=912.3 width=2 class=y /><rect x=915.3 width=1 class=x /><rect x=917 width=6.3 class=o /><rect x=926 width=1.7 class=y /><rect x=929 width=1 class=u /><rect x=931 width=4 class=t /><rect x=976 width=1.3 class=o /><rect x=980.7 width=1.3 class=o /><rect x=990.3 width=1.4 class=n /><rect x=1009 width=1.3 class=r /><rect x=1016 width=1.3 class=u /><rect x=1018.7 width=8 class=h /><rect x=1027.7 width=13.6 class=u /><rect x=1042 width=1.3 class=o /><rect x=1055.7 width=6.3 class=f /><rect x=1063.3 width=6 class=o /><rect x=1072.7 width=1 class=n /><rect x=1075 width=6 class=x /><rect x=1082 width=8.3 class=q /><rect x=1091.7 width=13.3 class=p /><rect x=1105.7 width=39 class=h /><rect x=1153 width=1.3 class=o /><rect x=1155 width=6 class=f /><rect x=1261 width=2 class=z /><rect x=1299 width=1 class=o /><rect x=1325 width=1 class=o /><rect x=1365 width=3.7 class=x /><rect x=1376.7 width=13.3 class=u /><rect x=1487.3 width=1.7 class=l /><rect x=1497 width=1 class=o /><rect x=1827 width=1.3 class=s /><rect x=1829 width=2 class=e /><rect x=1832 width=1 class=j /><rect x=1834 width=1 class=i /><rect x=1836 width=1.3 class=y /><rect x=1838.7 width=1.3 class=u /><rect x=1841 width=1.7 class=j /><rect x=1846 width=1 class=f /></g>
<g transform="translate(0,287.8)"><rect x=126.7 width=2.3 class=n /><rect x=136.7 width=25 class=g /><rect x=163 width=1 class=u /><rect x=165 width=1.7 class=h /><rect x=179 width=2.3 class=r /><rect x=727.7 width=2.3 class=h /><rect x=834 width=1.7 class=p /><rect x=836.7 width=4 class=v /><rect x=842 width=1.3 class=o /><rect x=865 width=2 class=y /><rect x=903.3 width=1.4 class=x /><rect x=905.3 width=2 class=z /><rect x=910 width=1.3 class=c /><rect x=912 width=2 class=y /><rect x=931 width=4 class=n /><rect x=990.3 width=1.4 class=y /><rect x=1009 width=1.3 class=y /><rect x=1018.3 width=8.4 class=j /><rect x=1027.7 width=4 class=p /><rect x=1032.7 width=8.6 class=v /><rect x=1058.3 width=3.7 class=x /><rect x=1082 width=1.7 class=v /><rect x=1084.7 width=5.6 class=s /><rect x=1091.7 width=3.6 class=x /><rect x=1096.3 width=8.7 class=w /><rect x=1112.7 width=1.3 class=u /><rect x=1115 width=6 class=v /><rect x=1122.3 width=6 class=o /><rect x=1129.3 width=6 class=h /><rect x=1136 width=2.3 class=p /><rect x=1139 width=5.7 class=x /><rect x=1160 width=1 class=o /><rect x=1261 width=2 class=y /><rect x=1379 width=4 class=x /><rect x=1383.7 width=6.3 class=f /><rect x=1487.3 width=1.7 class=y /><rect x=1827 width=1.3 class=n /><rect x=1829 width=2 class=y /><rect x=1832 width=1 class=x /><rect x=1834 width=1 class=u /><rect x=1838.7 width=1.3 class=t /><rect x=1841 width=1.7 class=y /></g>
<g transform="translate(0,270.7)"><rect x=126.7 width=2.3 class=p /><rect x=136.7 width=25 class=g /><rect x=163 width=1 class=p /><rect x=179 width=2.3 class=r /><rect x=727.7 width=2.3 class=x /><rect x=834 width=1.7 class=b /><rect x=836.7 width=4 class=k /><rect x=905 width=1.7 class=y /><rect x=910 width=1.3 class=x /><rect x=933.3 width=1.7 class=z /><rect x=1018 width=8.7 class=w /><rect x=1027.7 width=1 class=p /><rect x=1030 width=2 class=c /><rect x=1034.7 width=6.6 class=v /><rect x=1082 width=1.7 class=x /><rect x=1084.7 width=5.6 class=x /><rect x=1098.3 width=4 class=x /><rect x=1103 width=2 class=z /><rect x=1112.7 width=1.3 class=x /><rect x=1115 width=1.3 class=h /><rect x=1117.3 width=3.7 class=b /><rect x=1129.3 width=1.7 class=y /><rect x=1131.7 width=3.6 class=e /><rect x=1136 width=2 class=y /><rect x=1141 width=1 class=s /><rect x=1143 width=1.7 class=y /><rect x=1383.7 width=6.3 class=l /><rect x=1827 width=1.3 class=n /><rect x=1834 width=1 class=m /><rect x=1838.7 width=1.3 class=h /><rect x=1841 width=1.7 class=z /></g>
<g transform="translate(0,253.6)"><rect x=126.7 width=2.3 class=a /><rect x=136.7 width=25 class=g /><rect x=163 width=1 class=o /><rect x=179 width=2.3 class=p /><rect x=834.3 width=1.7 class=z /><rect x=839 width=2 class=y /><rect x=1020.7 width=4 class=m /><rect x=1026 width=1 class=y /><rect x=1030 width=2 class=y /><rect x=1037 width=4 class=x /><rect x=1103 width=2 class=y /><rect x=1115 width=1.3 class=o /><rect x=1117.7 width=3.3 class=x /><rect x=1131 width=4.3 class=o /><rect x=1141 width=1.3 class=o /><rect x=1388 width=2 class=y /><rect x=1827 width=1.3 class=i /><rect x=1834 width=1 class=o /><rect x=1838.7 width=1.3 class=c /><rect x=1841 width=1.7 class=n /></g>
<g transform="translate(0,236.5)"><rect x=127 width=2 class=y /><rect x=137 width=24.7 class=a /><rect x=163 width=1 class=j /><rect x=179 width=2 class=y /><rect x=834.3 width=1.7 class=y /><rect x=1020.7 width=1.5 class=o /><rect x=1023 width=2 class=h /><rect x=1037 width=2 class=j /><rect x=1040 width=1 class=o /><rect x=1117 width=4 class=u /><rect x=1827 width=1.3 class=h /><rect x=1838.7 width=1.3 class=n /></g>
<g transform="translate(0,219.4)"><rect x=137 width=22.3 class=g /><rect x=160 width=1.7 class=z /><rect x=163 width=1 class=j /><rect x=1023 width=2 class=y /><rect x=1119.7 width=1.3 class=o /><rect x=1827 width=1.3 class=n /><rect x=1838.7 width=1.3 class=m /></g>
<g transform="translate(0,202.3)"><rect x=137 width=22.3 class=a /><rect x=160 width=1.7 class=y /><rect x=163 width=1 class=x /><rect x=1827 width=1.3 class=h /><rect x=1838.7 width=1.3 class=u /></g>
<g transform="translate(0,185.2)"><rect x=137 width=22.3 class=t /><rect x=1827 width=1.3 class=o /><rect x=1838.7 width=1.3 class=x /></g>
<g transform="translate(0,168.1)"><rect x=137 width=22.3 style="fill:#14c8c0" /></g>
<g transform="translate(0,151)"><rect x=137 width=22.3 class=h /></g>
<g transform="translate(0,133.9)"><rect x=137 width=22.3 class=h /></g>
<g transform="translate(0,116.8)"><rect x=137 width=20.3 class=v /><rect x=158 width=1.3 class=n /></g>
<g transform="translate(0,99.7)"><rect x=137 width=1.3 class=u /><rect x=139 width=6.3 class=h /><rect x=146.3 width=11 class=v /><rect x=158 width=1.3 class=l /></g>
<g transform="translate(0,82.6)"><rect x=137 width=1.3 class=o /><rect x=139 width=6.3 class=u /><rect x=148.3 width=1.7 class=y /><rect x=151 width=4.3 class=h /><rect x=156 width=1.3 class=q /></g>
<g transform="translate(0,65.5)"><rect x=139 width=6.3 class=s /><rect x=153 width=2.3 class=y /><rect x=156 width=1 class=o /></g>
<g transform="translate(0,48.4)"><rect x=141.3 width=2 class=v /><rect x=144 width=1 class=o /></g>
<g transform="translate(0,31.3)"><rect x=141.3 width=2 class=y /></g>
</svg>
<div id="info"><b>Object name:</b> ./analysis_engine/perf/profile_algo_runner.py (module)<br><b>Run time:</b> 8.361271142959595 s<br><b>Total samples:</b> 795<br><b>Sample interval:</b> 0.001 s<br><b>Timestamp:</b> 2/15/2019 4:57:40</div>
<div id="tip"><b>Function name:</b> handle_minute_dataset<br><b>Line number:</b> 3402<br><b>Filename:</b> /opt/sa/analysis_engine/algo.py<br><b>Sample count:</b> 689<br><b>Percentage:</b> 86.7%</div>
</body></html>
